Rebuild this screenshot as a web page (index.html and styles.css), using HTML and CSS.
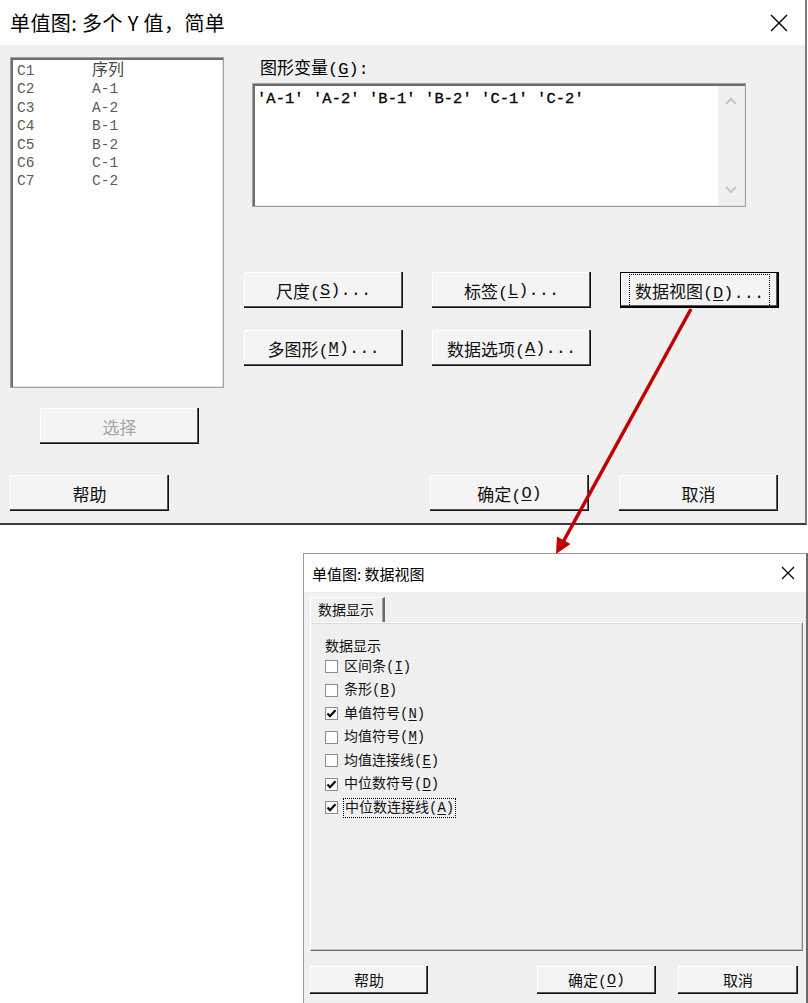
FILE: index.html
```html
<!DOCTYPE html>
<html lang="zh">
<head>
<meta charset="utf-8">
<title>单值图</title>
<link rel="stylesheet" href="styles.css">
</head>
<body>
<div class="page">
  <div class="dlg1">
    <div class="titlebar t1">
      <span class="title">单值图: 多个 Y 值，简单</span>
      <svg class="close1" width="18" height="18" viewBox="0 0 18 18"><path d="M1 1 L17 17 M17 1 L1 17" stroke="#000" stroke-width="1.4" fill="none"/></svg>
    </div>
    <div class="body1">
      <div class="top">
        <div class="leftcol">
          <div class="list">
            <div class="row"><span>C1</span><span class="cjk">序列</span></div>
            <div class="row"><span>C2</span><span>A-1</span></div>
            <div class="row"><span>C3</span><span>A-2</span></div>
            <div class="row"><span>C4</span><span>B-1</span></div>
            <div class="row"><span>C5</span><span>B-2</span></div>
            <div class="row"><span>C6</span><span>C-1</span></div>
            <div class="row"><span>C7</span><span>C-2</span></div>
          </div>
          <div class="btn big disabled sel">选择</div>
        </div>
        <div class="rightcol">
          <div class="lbl">图形变量(<u>G</u>):</div>
          <div class="tarea">
            <div class="tcontent">'A-1' 'A-2' 'B-1' 'B-2' 'C-1' 'C-2'</div>
            <div class="sbar">
              <svg width="14" height="10" viewBox="0 0 14 10"><path d="M2 8 L7 3 L12 8" stroke="#c4c4c4" stroke-width="2" fill="none"/></svg>
              <svg width="14" height="10" viewBox="0 0 14 10"><path d="M2 2 L7 7 L12 2" stroke="#c4c4c4" stroke-width="2" fill="none"/></svg>
            </div>
          </div>
          <div class="btngrid">
            <div class="btn big">尺度(<u>S</u>)...</div>
            <div class="btn big">标签(<u>L</u>)...</div>
            <div class="btn big default"><span class="focus">数据视图(<u>D</u>)...</span></div>
            <div class="btn big">多图形(<u>M</u>)...</div>
            <div class="btn big">数据选项(<u>A</u>)...</div>
          </div>
        </div>
      </div>
      <div class="bottom1">
        <div class="btn big help1">帮助</div>
        <div class="btn big">确定(<u>O</u>)</div>
        <div class="btn big">取消</div>
      </div>
    </div>
  </div>

  <div class="dlg2">
    <div class="titlebar t2">
      <span class="title2">单值图: 数据视图</span>
      <svg class="close2" width="14" height="14" viewBox="0 0 14 14"><path d="M1 1 L13 13 M13 1 L1 13" stroke="#000" stroke-width="1.2" fill="none"/></svg>
    </div>
    <div class="body2">
      <div class="tabs">
        <div class="tab">数据显示</div>
      </div>
      <div class="panel">
        <div class="glabel">数据显示</div>
        <div class="crow"><span class="cb"></span><span>区间条(<u>I</u>)</span></div>
        <div class="crow"><span class="cb"></span><span>条形(<u>B</u>)</span></div>
        <div class="crow"><span class="cb"><svg width="11" height="11" viewBox="0 0 11 11"><path d="M1.5 5.5 L4 8.2 L9.5 2.2" stroke="#000" stroke-width="2.2" fill="none"/></svg></span><span>单值符号(<u>N</u>)</span></div>
        <div class="crow"><span class="cb"></span><span>均值符号(<u>M</u>)</span></div>
        <div class="crow"><span class="cb"></span><span>均值连接线(<u>E</u>)</span></div>
        <div class="crow"><span class="cb"><svg width="11" height="11" viewBox="0 0 11 11"><path d="M1.5 5.5 L4 8.2 L9.5 2.2" stroke="#000" stroke-width="2.2" fill="none"/></svg></span><span>中位数符号(<u>D</u>)</span></div>
        <div class="crow"><span class="cb"><svg width="11" height="11" viewBox="0 0 11 11"><path d="M1.5 5.5 L4 8.2 L9.5 2.2" stroke="#000" stroke-width="2.2" fill="none"/></svg></span><span class="focusl">中位数连接线(<u>A</u>)</span></div>
      </div>
      <div class="bottom2">
        <div class="btn small b2help">帮助</div>
        <div class="btn small b2ok">确定(<u>O</u>)</div>
        <div class="btn small b2cancel">取消</div>
      </div>
    </div>
  </div>

  <svg class="arrow" width="808" height="1003" viewBox="0 0 808 1003">
    <line x1="691" y1="309" x2="562" y2="544" stroke="#c00000" stroke-width="3.5"/>
    <polygon points="556,554 570.5,544 557,536.5" fill="#c00000"/>
  </svg>
</div>
</body>
</html>
```

FILE: styles.css
```css
html, body {
  margin: 0;
  padding: 0;
  background: #ffffff;
}
.page {
  position: relative;
  width: 808px;
  height: 1003px;
  overflow: hidden;
  font-family: "Noto Sans CJK SC", "Liberation Sans", sans-serif;
  color: #000;
}
u {
  text-decoration: underline;
  text-underline-offset: 2px;
}

/* ---------- dialog 1 ---------- */
.dlg1 {
  width: 807px;
  height: 525px;
  box-sizing: border-box;
  border-right: 2px solid #7c7c7c;
  border-bottom: 2px solid #3a3a3a;
  display: flex;
  flex-direction: column;
}
.titlebar {
  background: #fff;
  display: flex;
  align-items: center;
  justify-content: space-between;
  flex-shrink: 0;
}
.t1 {
  height: 45px;
  padding: 0 17px 0 10px;
}
.title {
  font-size: 20px;
  letter-spacing: 0.4px;
}
.body1 {
  flex: 1;
  background: #f0f0f0;
  padding: 12px 0 0 10px;
  box-sizing: border-box;
}
.top {
  display: flex;
  gap: 20px;
}
.leftcol {
  width: 214px;
  display: flex;
  flex-direction: column;
}
.list {
  height: 331px;
  box-sizing: border-box;
  background: #fff;
  border: 1px solid #a0a0a0;
  box-shadow: inset 2px 2px 0 #6e6e6e, inset -1px -1px 0 #e6e6e6;
  padding: 4px 6px;
  font-family: "Liberation Mono", "Noto Sans CJK SC", monospace;
  font-size: 14.5px;
  line-height: 18.4px;
  color: #5a5a5a;
}
.row {
  display: grid;
  grid-template-columns: 75px auto;
}
.row .cjk {
  font-size: 16px;
  line-height: 18.4px;
  color: #444;
}
.btn {
  background: #f4f4f4;
  box-shadow: inset -1px -1px 0 #111, inset -2px -2px 0 #555, inset 1px 1px 0 #ffffff;
  display: flex;
  align-items: center;
  justify-content: center;
  box-sizing: border-box;
  font-family: "Liberation Mono", "Noto Sans CJK SC", monospace;
  color: #111;
}
.btn.big {
  height: 36px;
  width: 159px;
  font-size: 17px;
}
.btn.disabled {
  color: #a6a6a6;
}
.sel {
  margin-top: 20px;
  margin-left: 30px;
  height: 37px;
}
.rightcol {
  width: 534px;
}
.lbl {
  margin-top: 3px;
  padding-left: 16px;
  font-family: "Liberation Mono", "Noto Sans CJK SC", monospace;
  font-size: 17px;
  line-height: 20px;
}
.tarea {
  margin-top: 3px;
  margin-left: 8px;
  width: 494px;
  height: 124px;
  box-sizing: border-box;
  background: #fff;
  border: 1px solid #a0a0a0;
  box-shadow: inset 2px 2px 0 #6e6e6e, inset -1px -1px 0 #e6e6e6;
  display: flex;
  padding: 2px 1px 1px 2px;
}
.tcontent {
  flex: 1;
  padding: 4px 0 0 2px;
  font-family: "Liberation Mono", monospace;
  font-size: 15.4px;
  line-height: 18px;
  color: #000;
  white-space: pre;
  letter-spacing: 0.1px;
  -webkit-text-stroke: 0.3px #000;
}
.sbar {
  width: 26px;
  background: #f0f0f0;
  display: flex;
  flex-direction: column;
  justify-content: space-between;
  align-items: center;
  padding: 10px 0 10px;
  box-sizing: border-box;
}
.btngrid {
  margin-top: 65px;
  display: grid;
  grid-template-columns: repeat(3, 159px);
  grid-auto-rows: 36px;
  column-gap: 29px;
  row-gap: 22px;
}
.btn.default {
  box-shadow: inset 0 0 0 1px #000, inset -2px -2px 0 #111, inset -3px -3px 0 #555, inset 2px 2px 0 #fff;
}
.focus {
  outline: 1px dotted #000;
  outline-offset: 0;
  padding: 3px 5px;
}
.bottom1 {
  margin-top: 31px;
  display: flex;
  gap: 30px;
  padding-right: 27px;
}
.help1 {
  width: 158px;
  margin-right: auto;
}

/* ---------- dialog 2 ---------- */
.dlg2 {
  margin-top: 28px;
  margin-left: 303px;
  width: 505px;
  height: 450px;
  box-sizing: border-box;
  border-left: 1px solid #9a9a9a;
  border-top: 1px solid #9a9a9a;
  border-right: 2px solid #6a6a6a;
  display: flex;
  flex-direction: column;
}
.t2 {
  height: 38px;
  padding: 0 11px 0 8px;
}
.title2 {
  font-size: 15px;
}
.body2 {
  flex: 1;
  background: #f0f0f0;
  padding: 5px 0 0 6px;
  box-sizing: border-box;
}
.tabs {
  display: flex;
  height: 25px;
}
.tab {
  width: 75px;
  box-sizing: border-box;
  border-left: 1px solid #fff;
  border-top: 1px solid #fff;
  border-right: 2px solid #6a6a6a;
  box-shadow: inset -1px 0 0 #a0a0a0;
  font-size: 14px;
  line-height: 22px;
  padding-left: 7px;
  color: #111;
}
.panel {
  width: 493px;
  height: 329px;
  box-sizing: border-box;
  border-left: 1px solid #fff;
  border-top: 1px solid #fff;
  border-right: 1px solid #8a8a8a;
  border-bottom: 1px solid #6a6a6a;
  box-shadow: inset 0 1px 0 #dcdcdc, inset -1px -1px 0 #c8c8c8;
  padding: 12px 0 0 14px;
  font-size: 14px;
  color: #111;
}
.glabel {
  line-height: 20px;
}
.crow {
  height: 23.5px;
  display: flex;
  align-items: center;
  gap: 6px;
  line-height: 18px;
}
.cb {
  width: 13px;
  height: 13px;
  box-sizing: border-box;
  background: #fff;
  border: 1px solid #8c8c8c;
  display: flex;
  align-items: center;
  justify-content: center;
}
.crow > span:last-child {
  font-family: "Liberation Mono", "Noto Sans CJK SC", monospace;
}
.focusl {
  outline: 1px dotted #000;
  outline-offset: 0;
  padding: 0 1px;
}
.bottom2 {
  margin-top: 15px;
  display: flex;
  padding-right: 8px;
}
.btn.small {
  height: 28px;
  font-size: 15px;
}
.b2help {
  width: 118px;
  margin-right: auto;
}
.b2ok {
  width: 119px;
  margin-right: 22px;
}
.b2cancel {
  width: 120px;
}

/* ---------- overlay arrow ---------- */
.arrow {
  position: absolute;
  left: 0;
  top: 0;
  pointer-events: none;
}
```
